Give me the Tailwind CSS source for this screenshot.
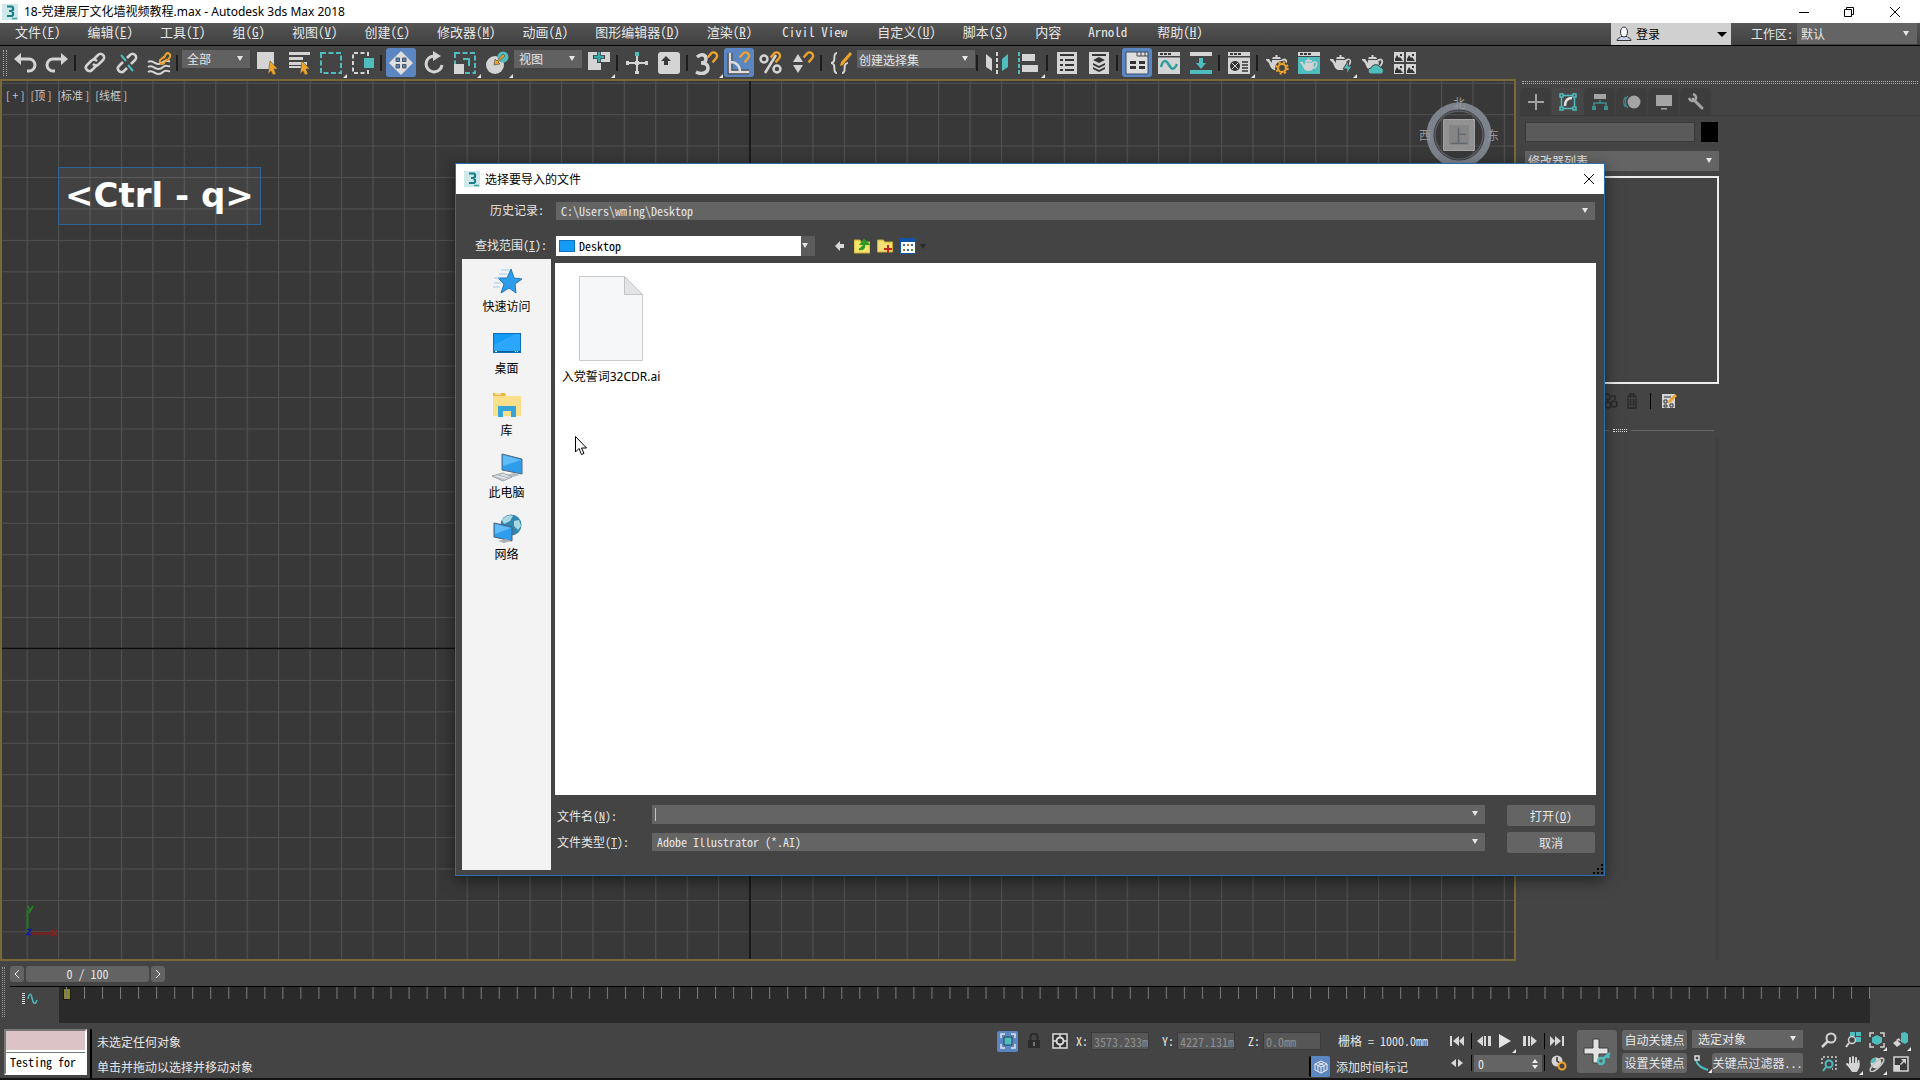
<!DOCTYPE html>
<html lang="zh-CN">
<head>
  <meta charset="UTF-8">
  <meta name="viewport" content="width=device-width, initial-scale=1.0">
  <title>18-党建展厅文化墙视频教程.max - Autodesk 3ds Max 2018</title>
  <script src="https://cdn.jsdelivr.net/npm/@tailwindcss/browser@4"></script>
</head>
<body class="relative h-screen overflow-hidden flex flex-col bg-[#444444] text-[#e6e6e6] text-xs font-['Noto_Sans_CJK_SC',sans-serif] [font-feature-settings:'hwid']">

  <!-- Shared symbols -->
  <svg class="hidden">
    <symbol id="caret" viewBox="0 0 6 5"><path d="M0 0h6L3 5z" fill="currentColor"/></symbol>
    <symbol id="corner" viewBox="0 0 4 4"><path d="M4 0v4H0z" fill="#e8e8e8"/></symbol>
    <symbol id="logo" viewBox="0 0 16 16">
      <rect width="16" height="16" fill="#cfe9ea"/>
      <path d="M5 2.500h5l1 1v2.500L9.500 7 11 8.500V11l-1 1H5" fill="none" stroke="#177f86" stroke-width="2.200"/>
      <path d="M7 7h3" stroke="#177f86" stroke-width="2"/>
      <path d="M10 14.500h5" stroke="#35a3a8" stroke-width="1.500"/>
    </symbol>
    <symbol id="teapot" viewBox="0 0 24 24">
      <path d="M8 6h7l1 2H7z" fill="#d2d2d2"/><path d="M10.500 4h2v2h-2z" fill="#d2d2d2"/>
      <path d="M1 8h3l3 4V9h10c2 4 0 8-3 10H9c-3-1-4-4-5-7L1 9z" fill="#d2d2d2"/>
      <path d="M16 10c4-3 6-1 5 2s-3 4-5 4" fill="none" stroke="#d2d2d2" stroke-width="1.800"/>
    </symbol>
    <symbol id="magnet" viewBox="0 0 12 12">
      <path d="M1.500 6l3-3.500a3 3 0 0 1 5 4L6 10.500" fill="none" stroke="#eda32b" stroke-width="2.200"/>
    </symbol>
    <symbol id="window" viewBox="0 0 24 24">
      <path d="M1 1h22v4H1zM1 6.500h22V23H1z" fill="#d4d4d4"/>
      <path d="M3 2h3v2H3zM7 2h3v2H7zM11 2h3v2h-3z" fill="#3a3a3a"/>
    </symbol>
    <symbol id="picture" viewBox="0 0 10 10">
      <rect width="10" height="10" fill="#d4d4d4"/><path d="M1 9V7l2-4 2 3 1-1 3 4zM6 2h2v2H6z" fill="#333"/>
    </symbol>
  </svg>

  <!-- Title bar -->
  <header class="flex items-center h-[23px] shrink-0 bg-white text-black pl-0.5 pr-0.5">
    <svg class="size-4"><use href="#logo"/></svg>
    <h1 class="ml-1.5 flex-1 font-['Noto_Sans','Noto_Sans_CJK_SC',sans-serif] [font-feature-settings:normal]">18-党建展厅文化墙视频教程.max - Autodesk 3ds Max 2018</h1>
    <div class="flex">
      <button aria-label="最小化" class="w-[45px] grid place-items-center"><svg class="size-3" viewBox="0 0 12 12"><path d="M1 6.500h10" stroke="#000"/></svg></button>
      <button aria-label="还原" class="w-[45px] grid place-items-center"><svg class="size-3" viewBox="0 0 12 12" fill="none" stroke="#000"><path d="M1.500 3.500h7v7h-7zM3.500 3.500v-2h7v7h-2"/></svg></button>
      <button aria-label="关闭" class="w-[47px] grid place-items-center"><svg class="size-3" viewBox="0 0 12 12" stroke="#000"><path d="M1 1l10 10M11 1L1 11"/></svg></button>
    </div>
  </header>

  <!-- Menu bar -->
  <div class="flex h-[23px] shrink-0 bg-linear-to-b from-[#555555] to-[#404040] border-b border-black">
    <nav class="flex flex-1 gap-[27px] pl-[15px] text-[13px] leading-[18px]">
      <a href="#">文件(<u>F</u>)</a>
      <a href="#">编辑(<u>E</u>)</a>
      <a href="#">工具(<u>T</u>)</a>
      <a href="#">组(<u>G</u>)</a>
      <a href="#">视图(<u>V</u>)</a>
      <a href="#">创建(<u>C</u>)</a>
      <a href="#">修改器(<u>M</u>)</a>
      <a href="#">动画(<u>A</u>)</a>
      <a href="#">图形编辑器(<u>D</u>)</a>
      <a href="#">渲染(<u>R</u>)</a>
      <a href="#" class="px-[3px]">Civil View</a>
      <a href="#">自定义(<u>U</u>)</a>
      <a href="#">脚本(<u>S</u>)</a>
      <a href="#">内容</a>
      <a href="#" class="pr-[3px]">Arnold</a>
      <a href="#">帮助(<u>H</u>)</a>
    </nav>
    <button class="flex items-center w-[120px] bg-[#d0d0d0] text-black pl-[5px] pr-1">
      <svg class="size-4" viewBox="0 0 16 16"><path d="M1 14.500c0-3 3-2 4-4h6c1 2 4 1 4 4z" fill="#cdd3ea" stroke="#333"/><ellipse cx="8" cy="6" rx="3.500" ry="5" fill="#f6f8ff" stroke="#333"/></svg>
      <span class="ml-1 flex-1 text-left">登录</span>
      <svg class="w-2.5 h-[5px]" viewBox="0 0 10 5"><path d="M0 0h10L5 5z"/></svg>
    </button>
    <label for="workspace" class="ml-5 mr-1 leading-[22px]">工作区:</label>
    <div class="relative w-[120px] mr-[3px]">
      <select id="workspace" class="appearance-none w-full h-[21px] bg-[#646464] pl-1"><option>默认</option></select>
      <svg class="absolute right-2 top-2 w-1.5 h-[5px] pointer-events-none"><use href="#caret"/></svg>
    </div>
  </div>

  <!-- Main toolbar -->
  <div class="flex items-center h-[33px] shrink-0">
    <div class="w-1 h-[26px] ml-[3px] mr-0.5 border-x border-dotted border-[#a8a8a8]"></div>
    <button aria-label="撤消" class="size-8 grid place-items-center"><svg class="size-6" viewBox="0 0 24 24"><path d="M5 8h11a5 5 0 0 1 0 12h-2" fill="none" stroke="#d4d4d4" stroke-width="3"/><path d="M8 2v12L1 8z" fill="#d4d4d4"/></svg></button>
    <button aria-label="重做" class="size-8 grid place-items-center"><svg class="size-6" viewBox="0 0 24 24"><path d="M19 8H8a5 5 0 0 0 0 12h2" fill="none" stroke="#d4d4d4" stroke-width="3"/><path d="M16 2v12l7-6z" fill="#d4d4d4"/></svg></button>
    <div class="w-1.5 h-4 border-l-2 border-[#1d1d1d] ml-px -mr-px"></div>
    <button aria-label="链接" class="size-8 grid place-items-center"><svg class="size-6" viewBox="0 0 24 24" fill="none" stroke="#d4d4d4" stroke-width="2.500"><path d="M10 9l5-5c2-2 4-1 5 0s2 3 0 5l-4 4c-2 2-4 2-6 0"/><path d="M14 14l-5 5c-2 2-4 1-5 0s-2-3 0-5l4-4c2-2 4-2 6 0"/></svg></button>
    <button aria-label="取消链接" class="size-8 grid place-items-center"><svg class="size-6" viewBox="0 0 24 24" fill="none" stroke="#d4d4d4" stroke-width="2.500"><path d="M12 7l3-3c2-2 4-1 5 0s2 3 0 5l-4 4"/><path d="M12 17l-3 3c-2 2-4 1-5 0s-2-3 0-5l4-4"/><path d="M6 4l5 6M13 14l5 6" stroke="#4fbcbd" stroke-width="2"/></svg></button>
    <button aria-label="绑定到空间扭曲" class="size-8 grid place-items-center"><svg class="size-6" viewBox="0 0 24 24" fill="none" stroke="#d4d4d4" stroke-width="2"><path d="M1 11c3-2 5 0 7 1s5 2 8-1 4 0 7-1M1 16c3-2 5 0 7 1s5 2 8-1 4 0 7-1M1 21c3-2 5 0 7 1s5 2 8-1 4 0 7-1"/><path d="M17 7l2-4c2-2 5 0 4 3l-3 4M18 5l-5 4c-1 3 2 5 4 3l3-4" stroke="#eda32b"/></svg></button>
    <div class="w-1.5 h-4 border-l-2 border-[#1d1d1d] ml-px -mr-px"></div>
    <div class="relative self-start mt-1 mx-px w-[68px]">
      <select aria-label="选择过滤器" class="appearance-none w-full h-[18px] bg-[#616161] pl-[5px] leading-[18px]"><option>全部</option></select>
      <svg class="absolute right-[7px] top-1.5 w-1.5 h-[5px] pointer-events-none"><use href="#caret"/></svg>
    </div>
    <button aria-label="选择对象" class="size-8 grid place-items-center"><svg class="size-6" viewBox="0 0 24 24"><path d="M2 1h17v17H2z" fill="#d4d4d4"/><path d="M15 10l8 8h-4l2 5-3 1-2-4-3 3z" fill="#eda32b" stroke="#444" stroke-width=".5"/></svg></button>
    <button aria-label="按名称选择" class="size-8 grid place-items-center"><svg class="size-6" viewBox="0 0 24 24"><path d="M2 1h21v3H2zM2 6h14v3H2zM2 11h18v3H2zM2 15h12v2H2z" fill="#d4d4d4"/><path d="M15 10l8 8h-4l2 5-3 1-2-4-3 3z" fill="#eda32b" stroke="#444" stroke-width=".5"/></svg></button>
    <button aria-label="矩形选择区域" class="relative size-8 grid place-items-center"><svg class="size-6" viewBox="0 0 24 24"><path d="M2 2h20v20H2z" fill="none" stroke="#4fbcbd" stroke-width="2" stroke-dasharray="5 2.500"/></svg><svg class="absolute right-0 bottom-px size-1"><use href="#corner"/></svg></button>
    <button aria-label="窗口/交叉" class="size-8 grid place-items-center"><svg class="size-6" viewBox="0 0 24 24"><path d="M17 5V2H2v20h15v-4" fill="none" stroke="#d4d4d4" stroke-width="2" stroke-dasharray="4 2.500"/><path d="M13 7h10v10H13z" fill="#4fbcbd"/></svg></button>
    <div class="w-1.5 h-4 border-l-2 border-[#1d1d1d] ml-px -mr-px"></div>
    <button aria-label="移动" class="w-[30px] h-[29px] mx-px rounded-[3px] bg-[#5b86c2] grid place-items-center"><svg class="size-6" viewBox="0 0 24 24"><path d="M12 0l12 12-12 12L0 12z" fill="#dedede"/><path d="M7 7h3.500v3.500H7zM13.500 7H17v3.500h-3.500zM7 13.500h3.500V17H7zM13.500 13.500H17V17h-3.500z" fill="#5b86c2" stroke="#4a5564"/></svg></button>
    <button aria-label="旋转" class="size-8 grid place-items-center"><svg class="size-6" viewBox="0 0 24 24"><path d="M13 5a8 8 0 1 0 8 9" fill="none" stroke="#d4d4d4" stroke-width="3"/><path d="M12 0v10l8-5z" fill="#d4d4d4"/></svg></button>
    <button aria-label="缩放" class="relative size-8 grid place-items-center"><svg class="size-6" viewBox="0 0 24 24"><path d="M2 2h20v20H2z" fill="none" stroke="#4fbcbd" stroke-width="2" stroke-dasharray="5 2.500"/><path d="M1 13h10v10H1z" fill="#d4d4d4"/><path d="M10 8h6v7" fill="none" stroke="#4fbcbd" stroke-width="2"/></svg><svg class="absolute right-0 bottom-px size-1"><use href="#corner"/></svg></button>
    <button aria-label="放置" class="relative size-8 grid place-items-center"><svg class="size-6" viewBox="0 0 24 24"><circle cx="10" cy="14" r="9" fill="#d4d4d4"/><circle cx="18" cy="6" r="5.500" fill="#4fbcbd"/><path d="M20 5l-7 6 2 2-6 1 1-6 2 2 6-7z" fill="#eda32b" stroke="#444" stroke-width=".6"/></svg><svg class="absolute right-0 bottom-px size-1"><use href="#corner"/></svg></button>
    <div class="relative self-start mt-1 mx-px w-[68px]">
      <select aria-label="参考坐标系" class="appearance-none w-full h-[18px] bg-[#616161] pl-[5px] leading-[18px]"><option>视图</option></select>
      <svg class="absolute right-[7px] top-1.5 w-1.5 h-[5px] pointer-events-none"><use href="#caret"/></svg>
    </div>
    <button aria-label="使用轴点中心" class="relative size-8 grid place-items-center"><svg class="size-6" viewBox="0 0 24 24"><path d="M1 1h22v10h-9v8H1z" fill="#d4d4d4"/><path d="M12 0v12M6 6h12" stroke="#444" stroke-width="4"/><path d="M12 1v10M7 6h10" stroke="#38a9aa" stroke-width="2.500"/></svg><svg class="absolute right-0 bottom-px size-1"><use href="#corner"/></svg></button>
    <div class="w-1.5 h-4 border-l-2 border-[#1d1d1d] ml-px -mr-px"></div>
    <button aria-label="选择并操纵" class="size-8 grid place-items-center"><svg class="size-6" viewBox="0 0 24 24"><path d="M12 5v16M2 12h20" stroke="#d4d4d4" stroke-width="2"/><path d="M10 20h4v3h-4zM1 10h3v4H1zM20 10h3v4h-3zM10 10h4v4h-4z" fill="#d4d4d4"/><path d="M10 1h4v4h-4z" fill="#4fbcbd"/></svg></button>
    <button aria-label="键盘快捷键覆盖" class="size-8 grid place-items-center"><svg class="size-6" viewBox="0 0 24 24"><rect x="1" y="1" width="22" height="22" rx="3" fill="#d4d4d4"/><path d="M9 5l5 5h-3v4H7v-4H4z" fill="#3a3a3a"/></svg></button>
    <div class="w-1.5 h-4 border-l-2 border-[#1d1d1d] ml-px -mr-px"></div>
    <button aria-label="捕捉开关" class="relative size-8 grid place-items-center"><svg class="size-6" viewBox="0 0 24 24"><path d="M2 6c5-4 9-2 9 2 0 3-3 4-5 4 3 0 7 1 7 5 0 5-6 7-12 4" fill="none" stroke="#d4d4d4" stroke-width="3.500"/><use href="#magnet" x="11" y="0" width="13" height="13"/></svg><svg class="absolute right-0 bottom-px size-1"><use href="#corner"/></svg></button>
    <button aria-label="角度捕捉" class="w-[30px] h-[29px] mx-px rounded-[3px] bg-[#5b86c2] grid place-items-center"><svg class="size-6" viewBox="0 0 24 24"><path d="M3 2v19h19" fill="none" stroke="#444" stroke-width="5"/><path d="M3 2v19h19M4 11c5 0 9 4 9 9" fill="none" stroke="#dedede" stroke-width="2.500"/><use href="#magnet" x="11" y="0" width="13" height="13"/></svg></button>
    <button aria-label="百分比捕捉" class="size-8 grid place-items-center"><svg class="size-6" viewBox="0 0 24 24"><path d="M17 4L6 22" stroke="#d4d4d4" stroke-width="2.500"/><g fill="none" stroke="#d4d4d4" stroke-width="2.500"><circle cx="5" cy="8" r="3.500"/><circle cx="18" cy="18" r="3.500"/></g><use href="#magnet" x="10" y="0" width="13" height="13"/></svg></button>
    <button aria-label="微调器捕捉" class="size-8 grid place-items-center"><svg class="size-6" viewBox="0 0 24 24"><path d="M2 11l5-8 5 8zM2 14l5 8 5-8z" fill="#d4d4d4"/><use href="#magnet" x="11" y="0" width="13" height="13"/></svg></button>
    <div class="w-1.5 h-4 border-l-2 border-[#1d1d1d] ml-px -mr-px"></div>
    <button aria-label="编辑命名选择集" class="size-8 grid place-items-center"><svg class="size-6" viewBox="0 0 24 24"><path d="M8 2C4 2 6 8 5 10s-2 2-3 2c1 0 2 0 3 2s-1 8 3 8M13 22c4 0 2-6 3-8s2-2 3-2" fill="none" stroke="#d4d4d4" stroke-width="2"/><path d="M21 1l2 2-9 11-3 1 1-4z" fill="#eda32b"/></svg></button>
    <div class="relative self-start mt-1 w-[118px]">
      <select aria-label="命名选择集" class="appearance-none w-full h-[18px] bg-[#616161] pl-0.5 leading-[17px]"><option>创建选择集</option></select>
      <svg class="absolute right-[7px] top-1.5 w-1.5 h-[5px] pointer-events-none"><use href="#caret"/></svg>
    </div>
    <div class="w-1.5 h-4 border-l-2 border-[#1d1d1d] ml-px -mr-px"></div>
    <button aria-label="镜像" class="size-8 grid place-items-center"><svg class="size-6" viewBox="0 0 24 24"><path d="M1 3l6 5v12l-6-4z" fill="#d4d4d4"/><path d="M23 3l-6 5v12l6-4z" fill="#4fbcbd"/><path d="M12 1v22" stroke="#d4d4d4" stroke-width="2" stroke-dasharray="4 2"/></svg></button>
    <button aria-label="对齐" class="relative size-8 grid place-items-center"><svg class="size-6" viewBox="0 0 24 24"><path d="M2 1v22" stroke="#4fbcbd" stroke-width="2" stroke-dasharray="4 2"/><path d="M5 3h13v7H5zM5 14h16v7H5z" fill="#d4d4d4"/></svg><svg class="absolute right-0 bottom-px size-1"><use href="#corner"/></svg></button>
    <div class="w-1.5 h-4 border-l-2 border-[#1d1d1d] ml-px -mr-px"></div>
    <button aria-label="场景资源管理器" class="size-8 grid place-items-center"><svg class="size-6" viewBox="0 0 24 24"><path d="M2 1h20v22H2z" fill="#d4d4d4"/><path d="M5 4h14M5 9h3M10 9h9M5 14h3M10 14h9M5 19h3M10 19h9" stroke="#333" stroke-width="2"/></svg></button>
    <button aria-label="层资源管理器" class="size-8 grid place-items-center"><svg class="size-6" viewBox="0 0 24 24"><path d="M2 1h20v22H2z" fill="#d4d4d4"/><path d="M5 3h14v2H5zM12 6l6 3-6 3-6-3zM6 12l6 3 6-3v2l-6 3-6-3zM6 16l6 3 6-3v2l-6 3-6-3z" fill="#333"/></svg></button>
    <div class="w-1.5 h-4 border-l-2 border-[#1d1d1d] ml-px -mr-px"></div>
    <button aria-label="功能区" class="w-[30px] h-[29px] mx-px rounded-[3px] bg-[#5b86c2] grid place-items-center"><svg class="size-6" viewBox="0 0 24 24"><path d="M1 1h22v22H1z" fill="#dedede" stroke="#3a4a66"/><path d="M12 1v4h11M16 1v4M20 1v4" fill="none" stroke="#444"/><path d="M5 10h6v3H5zM14 10h6v3h-6zM5 15h6v3H5zM14 15h6v3h-6z" fill="#333"/></svg></button>
    <button aria-label="曲线编辑器" class="size-8 grid place-items-center"><svg class="size-6" viewBox="0 0 24 24"><use href="#window"/><path d="M4 16c2-8 5-7 8-2s5 5 8-1" fill="none" stroke="#2f9c9d" stroke-width="2.500"/></svg></button>
    <button aria-label="图解视图" class="size-8 grid place-items-center"><svg class="size-6" viewBox="0 0 24 24"><path d="M1 1h22v4H1z" fill="#d4d4d4"/><path d="M1 19h22v4H1zM10 7h4v5h3l-5 6-5-6h3z" fill="#4fbcbd"/></svg></button>
    <div class="w-1.5 h-4 border-l-2 border-[#1d1d1d] ml-px -mr-px"></div>
    <button aria-label="材质编辑器" class="relative size-8 grid place-items-center"><svg class="size-6" viewBox="0 0 24 24"><use href="#window"/><circle cx="8" cy="15" r="5" fill="#333"/><path d="M5 12l6 6M11 12l-6 6" stroke="#d4d4d4"/><path d="M15 11h6M15 14h6M15 17h6M15 20h6" stroke="#333" stroke-width="1.500"/></svg><svg class="absolute right-0 bottom-px size-1"><use href="#corner"/></svg></button>
    <div class="w-1.5 h-4 border-l-2 border-[#1d1d1d] ml-px -mr-px"></div>
    <button aria-label="渲染设置" class="size-8 grid place-items-center"><svg class="size-6" viewBox="0 0 24 24"><use href="#teapot"/><circle cx="17" cy="17" r="7" fill="#444"/><circle cx="17" cy="17" r="4" fill="none" stroke="#eda32b" stroke-width="2.200"/><circle cx="17" cy="17" r="5.700" fill="none" stroke="#eda32b" stroke-width="2" stroke-dasharray="2.200 2.300"/></svg></button>
    <button aria-label="渲染帧窗口" class="size-8 grid place-items-center"><svg class="size-6" viewBox="0 0 24 24"><use href="#window"/><path d="M1 6h22v17H1z" fill="#4fbcbd"/><use href="#teapot" x="2" y="4" width="20" height="20"/></svg></button>
    <button aria-label="渲染产品" class="relative size-8 grid place-items-center"><svg class="size-6" viewBox="0 0 24 24"><use href="#teapot"/><path d="M20 9l-6 9h4l-1 6 6-9h-4z" fill="#4fbcbd" stroke="#444"/></svg><svg class="absolute right-0 bottom-px size-1"><use href="#corner"/></svg></button>
    <button aria-label="云渲染" class="size-8 grid place-items-center"><svg class="size-6" viewBox="0 0 24 24"><use href="#teapot"/><path d="M10 23a3 3 0 0 1 0-6 5 5 0 0 1 9-1 4 4 0 0 1 2 7z" fill="#4fbcbd" stroke="#444"/></svg></button>
    <button aria-label="渲染库" class="size-8 grid place-items-center"><svg class="size-6" viewBox="0 0 24 24"><use href="#picture" x="1" y="1" width="10" height="10"/><use href="#picture" x="13" y="1" width="10" height="10"/><use href="#picture" x="1" y="13" width="10" height="10"/><use href="#picture" x="13" y="13" width="10" height="10"/></svg></button>
  </div>

  <!-- Viewport and command panel -->
  <main class="flex flex-1 min-h-0">
    <section class="relative flex-1 bg-[#383838] border-2 border-[#786a38] overflow-hidden">
      <svg class="absolute inset-0 size-full">
        <defs>
          <pattern id="grid" x="747.500" y="567.500" width="31.430" height="31.430" patternUnits="userSpaceOnUse">
            <path d="M0 .5h32M.5 0v32" stroke="#525252" stroke-width="1.200"/>
          </pattern>
        </defs>
        <rect width="100%" height="100%" fill="url(#grid)"/>
        <path d="M748 0v900M0 567.500h1600" stroke="#0c0c0c" stroke-width="1.500"/>
        <!-- Axis tripod -->
        <path d="M25.500 829v22" stroke="#1f7a1f" stroke-width="2"/>
        <path d="M29 852.500h22" stroke="#6f2424" stroke-width="3"/>
        <path d="M26 825l2 4M31 825l-4 7" stroke="#1f8f1f" stroke-width="1.500"/>
        <path d="M50 849l5 6M55 849l-5 6" stroke="#8f2020" stroke-width="1.500"/>
        <path d="M25 848.500h4l-4 5h4" fill="none" stroke="#1414a8" stroke-width="1.500"/>
      </svg>
      <p class="relative flex gap-1.5 pl-1 pt-[5px] text-[11px] leading-[18px] text-[#c8c8c8] [font-feature-settings:normal]"><span>[ + ]</span><span>[顶 ]</span><span>[标准 ]</span><span>[线框 ]</span></p>
      <div class="absolute left-14 top-[86px] h-[58px] px-[6px] flex items-center border border-[#2f639c] bg-white/5 text-white text-[34px] font-black font-['DejaVu_Sans',sans-serif] [font-feature-settings:normal] whitespace-pre">&lt;Ctrl - q&gt;</div>
      <!-- View cube -->
      <div class="absolute right-[15px] top-[13px] w-20 text-[#96989c]">
        <svg class="size-20" viewBox="0 0 80 80">
          <circle cx="40" cy="41" r="29" fill="none" stroke="#7d838c" stroke-width="7"/>
          <circle cx="40" cy="41" r="24" fill="none" stroke="#5a5d62" stroke-width="1.500"/>
          <path d="M24.500 25.500h31v31h-31z" fill="#929292" stroke="#a4a4a4"/>
          <path d="M30 31h20v20H30z" fill="#858585"/>
        </svg>
        <span class="absolute left-[34px] top-0 leading-[18px]">北</span>
        <span class="absolute left-0 top-8 leading-[18px]">西</span>
        <span class="absolute right-0 top-8 leading-[18px]">东</span>
        <span class="absolute left-[31px] top-8 text-lg leading-[18px] text-[#60666e]">上</span>
      </div>
    </section>

    <aside class="w-[404px] pl-1 pt-0.5">
      <div class="h-[3px] mx-0.5 border-y border-dotted border-[#a8a8a8]"></div>
      <div class="flex mt-1 border-b border-[#393939]">
        <button aria-label="创建" class="w-[31px] h-[27px] mr-px rounded-t bg-[#3d3d3d] grid place-items-center"><svg class="size-[18px]" viewBox="0 0 18 18"><path d="M9 1v16M1 9h16" stroke="#a4a4a4" stroke-width="2"/></svg></button>
        <button aria-label="修改" class="w-[31px] h-[27px] mr-px rounded-t bg-[#474747] grid place-items-center"><svg class="size-[18px]" viewBox="0 0 18 18" fill="none" stroke="#4fbcbd" stroke-width="1.500"><path d="M4 2.500h10M4 15.500h10M2.500 4v10M15.500 4v10"/><path d="M1 1h3v3H1zM14 1h3v3h-3zM1 14h3v3H1zM14 14h3v3h-3z"/><path d="M6 13c0-5 2-8 7-8" stroke="#e0e0e0" stroke-width="2.500"/></svg></button>
        <button aria-label="层次" class="w-[31px] h-[27px] mr-px rounded-t bg-[#3d3d3d] grid place-items-center"><svg class="size-[18px]" viewBox="0 0 18 18"><path d="M3 1h12v5H3z" fill="#a4a4a4"/><path d="M9 7v3M3 14v-4h12v4" fill="none" stroke="#3f8d8e" stroke-width="1.500"/><path d="M1 13h4v4H1zM13 13h4v4h-4z" fill="#3f8d8e"/></svg></button>
        <button aria-label="运动" class="w-[31px] h-[27px] mr-px rounded-t bg-[#3d3d3d] grid place-items-center"><svg class="size-[18px]" viewBox="0 0 18 18"><circle cx="11" cy="9" r="6.500" fill="#a4a4a4"/><path d="M5 3a8 8 0 0 0 0 12M2.500 4a8 8 0 0 0 0 10" fill="none" stroke="#3f8d8e" stroke-width="1.300"/></svg></button>
        <button aria-label="显示" class="w-[31px] h-[27px] mr-px rounded-t bg-[#3d3d3d] grid place-items-center"><svg class="size-[18px]" viewBox="0 0 18 18"><path d="M1 2h16v11H1zM6 15h6v1.500H6z" fill="#a4a4a4"/></svg></button>
        <button aria-label="实用程序" class="w-[31px] h-[27px] mr-px rounded-t bg-[#3d3d3d] grid place-items-center"><svg class="size-[18px]" viewBox="0 0 18 18"><path d="M6 6l9 9" stroke="#a4a4a4" stroke-width="3" stroke-linecap="round"/><path d="M2 5c1 3 4 4 6 2s1-5-2-6" fill="none" stroke="#a4a4a4" stroke-width="2.500"/></svg></button>
      </div>
      <div class="w-[194px] ml-[5px] mt-1.5">
        <div class="flex items-center">
          <input type="text" aria-label="对象名称" class="w-[170px] h-5 bg-[#5a5a5a] border border-[#3a3a3a]">
          <button aria-label="对象颜色" class="ml-1.5 w-[17px] h-5 bg-black"></button>
        </div>
        <div class="relative mt-[9px]">
          <select aria-label="修改器列表" class="appearance-none block w-full h-5 bg-[#646464] pl-[3px] leading-[18px]"><option>修改器列表</option></select>
          <svg class="absolute right-[7px] top-[7px] w-1.5 h-[5px] pointer-events-none"><use href="#caret"/></svg>
        </div>
        <div class="mt-[5px] h-[208px] border-2 border-[#ececec]"></div>
        <div class="mt-[9px] flex justify-end items-center pr-[42px]">
          <svg class="size-4" viewBox="0 0 16 16" fill="none" stroke="#2a2a2a" stroke-width="1.500"><circle cx="5" cy="4" r="3"/><circle cx="6" cy="12" r="3"/><circle cx="12" cy="11" r="3"/><path d="M9 3h4v4"/></svg>
          <svg class="ml-1.5 size-4" viewBox="0 0 16 16" fill="none" stroke="#272727" stroke-width="1.300"><path d="M4 5v10h8V5M3 3.500h10M6 3V1h4v2M6.500 6v7M9.500 6v7"/></svg>
          <div class="ml-2.5 h-4 border-l border-black"></div>
          <svg class="ml-2.5 size-4" viewBox="0 0 16 16"><path d="M1 1h13v14H1z" fill="#d4d4d4"/><path d="M3 4h7M3 7h3v3H3zM3 12h3v2H3zM9 11h3v3H9z" fill="none" stroke="#333"/><path d="M14 1l2 2-7 7-2 0 1-3z" fill="#eda32b"/></svg>
        </div>
        <div class="mt-5 flex items-center gap-1 pr-[5px]">
          <div class="w-[84px] border-t border-[#666]"></div>
          <div class="w-3.5 h-[3px] border-y border-dotted border-[#ddd]"></div>
          <div class="flex-1 border-t border-[#666]"></div>
        </div>
        <div class="mt-1.5 h-[522px] border-r-4 border-[#3f3f3f]"></div>
      </div>
    </aside>
  </main>

  <!-- Time slider -->
  <div class="flex h-[62px] shrink-0 pl-0.5">
    <div class="w-[3px] my-[6px] border-x border-dotted border-[#9a9a9a]"></div>
    <div class="flex-1 ml-[5px]">
      <div class="flex items-end gap-0.5 h-[26px] pb-1 border-b border-black">
        <button aria-label="上一帧" class="w-3.5 h-4 rounded-[3px] bg-[#636363] grid place-items-center"><svg class="w-1.5 h-2.5" viewBox="0 0 6 10"><path d="M5 1L1 5l4 4" fill="none" stroke="#eee"/></svg></button>
        <button class="w-[123px] h-4 rounded-[3px] bg-[#636363] leading-4">0 / 100</button>
        <button aria-label="下一帧" class="w-3.5 h-4 rounded-[3px] bg-[#636363] grid place-items-center"><svg class="w-1.5 h-2.5" viewBox="0 0 6 10"><path d="M1 1l4 4-4 4" fill="none" stroke="#eee"/></svg></button>
      </div>
      <div class="flex h-9 pr-[50px]">
        <button aria-label="迷你曲线编辑器" class="w-[49px] grid justify-start items-center pl-3 pb-3"><svg class="w-4 h-3" viewBox="0 0 16 12" fill="none"><path d="M1.500 0v12" stroke="#ddd" stroke-width="3" stroke-dasharray="1 1"/><path d="M6 6c1-6 3-6 4-1s3 8 5 2" stroke="#4fbcbd" stroke-width="1.500"/></svg></button>
        <div class="flex-1 bg-[#2a2a2a]">
          <svg class="w-full h-9">
            <defs>
              <pattern id="frames" x="7" y="0" width="18.030" height="36" patternUnits="userSpaceOnUse"><path d="M.5 0v12" stroke="#7c7c7c"/></pattern>
            </defs>
            <rect x="4.500" y="1.500" width="7" height="11" fill="#8b8626" stroke="#1c1c10"/>
            <rect width="100%" height="36" fill="url(#frames)"/>
          </svg>
        </div>
      </div>
    </div>
  </div>

  <!-- Status bar -->
  <footer class="flex h-[57px] shrink-0 pl-1 pt-[6px] border-b-2 border-[#141414]">
    <div class="w-[83px] h-[46px] flex flex-col border-2 border-t-[#777] border-l-[#777] border-white text-black">
      <div class="flex-1 bg-[#dcc3c6] border-b-2 border-white"></div>
      <input type="text" aria-label="脚本侦听器" value="Testing for" class="h-[21px] w-full bg-white border-t border-[#777] pl-1 pb-[3px]">
    </div>
    <div class="ml-[3px] h-[49px] border-l-2 border-black"></div>
    <div class="flex-1 pl-[5px] leading-[25px]">
      <p>未选定任何对象</p>
      <p>单击并拖动以选择并移动对象</p>
    </div>

    <!-- Coordinates -->
    <div class="w-[448px] pt-0.5">
      <div class="flex items-center h-5">
        <button aria-label="孤立当前选择" class="size-[21px] rounded-[2px] bg-[#5b86c2] grid place-items-center"><svg class="size-4" viewBox="0 0 16 16"><path d="M1 5V1h4M11 1h4v4M15 11v4h-4M5 15H1v-4" fill="none" stroke="#e4e4e4" stroke-width="1.500"/><path d="M4 4h8v8H4z" fill="#4fbcbd" stroke="#2b3c55"/></svg></button>
        <button aria-label="选择锁定切换" class="ml-1.5 size-5 grid place-items-center"><svg class="size-4" viewBox="0 0 16 16"><path d="M2 7h12v8H2z" fill="#2b2b2b"/><path d="M4.500 7V4a3.500 3.500 0 0 1 7 0v3" fill="none" stroke="#2b2b2b" stroke-width="2"/><path d="M7 9h2v4H7z" fill="#777"/></svg></button>
        <button aria-label="绝对模式变换输入" class="mx-1.5 size-5 grid place-items-center"><svg class="size-4" viewBox="0 0 16 16"><path d="M1 1h14v14H1z" fill="#333" stroke="#ddd" stroke-width="1.500"/><circle cx="8" cy="8" r="3.500" fill="none" stroke="#ddd" stroke-width="2"/><path d="M8 1v4M8 11v4M1 8h4M11 8h4" stroke="#ddd" stroke-width="1.500"/></svg></button>
        <label for="cx" class="w-[15px]">X:</label>
        <input id="cx" type="text" value="3573.233m" class="w-[58px] h-[18px] bg-[#565656] border border-[#3b3b3b] pl-0.5 text-[#8f8f8f] mr-[13px]">
        <label for="cy" class="w-[15px]">Y:</label>
        <input id="cy" type="text" value="4227.131m" class="w-[58px] h-[18px] bg-[#565656] border border-[#3b3b3b] pl-0.5 text-[#8f8f8f] mr-[13px]">
        <label for="cz" class="w-[15px]">Z:</label>
        <input id="cz" type="text" value="0.0mm" class="w-[58px] h-[18px] bg-[#565656] border border-[#3b3b3b] pl-0.5 text-[#8f8f8f] mr-[17px]">
        <span class="whitespace-nowrap">栅格 = 1000.0mm</span>
      </div>
      <div class="flex items-center mt-[5px] ml-[312px]">
        <button aria-label="自适应降级" class="size-[21px] border-l-2 border-black rounded-[2px] bg-[#5b86c2] grid place-items-center"><svg class="size-3.5" viewBox="0 0 14 14" fill="none" stroke="#eee"><path d="M7 1l6 3v6l-6 3-6-3V4zM1 4l6 3 6-3M7 7v6M4 2.500l6 3v6M10 2.500l-6 3v6"/></svg></button>
        <span class="ml-1.5">添加时间标记</span>
      </div>
    </div>

    <!-- Playback -->
    <div class="w-[132px] pt-1">
      <div class="flex items-center h-4">
        <button aria-label="转至开头" class="w-6 pl-1"><svg class="w-4 h-3" viewBox="0 0 16 12" fill="#d8d8d8"><path d="M1 1h2v10H1zM10 1v10L4 6zM15 1v10l-5-5z"/></svg></button>
        <div class="h-4 border-l border-black mx-0.5"></div>
        <button aria-label="上一帧" class="w-5 pl-0.5"><svg class="w-4 h-3" viewBox="0 0 16 12" fill="#d8d8d8"><path d="M7 1v10L1 6zM8 1h2v10H8zM12 1h3v10h-3z"/></svg></button>
        <button aria-label="播放动画" class="relative w-6 h-4 pl-1"><svg class="w-3.5 h-3.5" viewBox="0 0 14 14" fill="#e4e4e4"><path d="M1 0l12 7-12 7z"/></svg><svg class="absolute right-0.5 -bottom-1 size-1"><use href="#corner"/></svg></button>
        <button aria-label="下一帧" class="w-6 pl-1"><svg class="w-4 h-3" viewBox="0 0 16 12" fill="#d8d8d8"><path d="M9 1v10l6-5zM1 1h3v10H1zM6 1h2v10H6z"/></svg></button>
        <div class="h-4 border-l border-black mx-0.5"></div>
        <button aria-label="转至结尾" class="w-5 pl-0.5"><svg class="w-4 h-3" viewBox="0 0 16 12" fill="#d8d8d8"><path d="M13 1h2v10h-2zM1 1v10l5-5zM6 1v10l6-5z"/></svg></button>
      </div>
      <div class="flex items-center h-5 mt-1">
        <button aria-label="关键点模式切换" class="w-6 pl-1.5"><svg class="w-3 h-2" viewBox="0 0 12 8" fill="#d8d8d8"><path d="M5 0v8L0 4zM7 0v8l5-4z"/></svg></button>
        <div class="h-4 border-l border-black mx-0.5"></div>
        <div class="relative w-[68px]">
          <input type="text" aria-label="当前帧" value="0" class="w-full h-[17px] bg-[#646464] pl-1">
          <svg class="absolute right-1 top-1 w-1.5 h-2.5 pointer-events-none" viewBox="0 0 6 10" fill="#eee"><path d="M0 4h6L3 0zM0 6h6l-3 4z"/></svg>
        </div>
        <div class="h-4 border-l border-black mx-0.5"></div>
        <button aria-label="时间配置" class="w-5 pl-1"><svg class="size-4" viewBox="0 0 16 16"><circle cx="6" cy="6" r="5.500" fill="#d4d4d4"/><path d="M6 2v4l3 2" fill="none" stroke="#333" stroke-width="1.500"/><circle cx="11" cy="11" r="3.500" fill="#444" stroke="#eda32b" stroke-width="2" /></svg></button>
      </div>
    </div>

    <!-- Keying -->
    <div class="flex gap-[5px] pt-px">
      <button aria-label="设置关键点" class="w-10 h-[43px] rounded-[3px] bg-[#646464] grid place-items-center"><svg class="size-8" viewBox="0 0 32 32"><path d="M12 3h6v9h9v6h-9v9h-6v-9H3v-6h9z" fill="#e2e2e2" stroke="#3c3c3c"/><circle cx="20" cy="25" r="3" fill="none" stroke="#4fbcbd" stroke-width="2.500"/><path d="M22 23l7-6M26 19l2 3" stroke="#4fbcbd" stroke-width="2.500"/></svg></button>
      <div class="flex flex-col gap-[3px] w-[65px]">
        <button class="h-5 rounded-[3px] bg-[#646464] leading-5">自动关键点</button>
        <button class="h-5 rounded-[3px] bg-[#646464] leading-5">设置关键点</button>
      </div>
      <div class="w-[111px]">
        <div class="relative">
          <select aria-label="关键点选择集" class="appearance-none block w-full h-[18px] bg-[#646464] pl-1.5 leading-[18px]"><option>选定对象</option></select>
          <svg class="absolute right-[7px] top-1.5 w-1.5 h-[5px] pointer-events-none"><use href="#caret"/></svg>
        </div>
        <div class="flex mt-[5px]">
          <button aria-label="默认切线" class="relative w-5 h-5"><svg class="size-5" viewBox="0 0 20 20" fill="none"><path d="M4 7c1 5 5 8 12 10" stroke="#4fbcbd" stroke-width="2"/><path d="M3 3h4v4H3z" stroke="#ddd" stroke-width="1.500"/></svg><svg class="absolute right-0 bottom-0 size-1"><use href="#corner"/></svg></button>
          <button class="w-[91px] h-5 rounded-[3px] bg-[#646464] leading-5 whitespace-nowrap">关键点过滤器...</button>
        </div>
      </div>
    </div>

    <!-- Viewport navigation -->
    <div class="grid grid-cols-4 content-start gap-y-0.5 w-24 ml-3.5 mr-[7px]">
      <button aria-label="缩放" class="h-[22px] grid place-items-center"><svg class="size-4" viewBox="0 0 16 16" fill="none" stroke="#d4d4d4"><circle cx="10" cy="6" r="4.500" stroke-width="2"/><path d="M6.500 9.500L1 15" stroke-width="2.500"/></svg></button>
      <button aria-label="缩放所有视图" class="h-[22px] grid place-items-center"><svg class="size-4" viewBox="0 0 16 16" fill="none"><path d="M5 0h5v4H5zM11 0h5v4h-5zM11 5h5v5h-5z" fill="#4fbcbd"/><circle cx="7" cy="8" r="3.500" stroke="#d4d4d4" stroke-width="1.500"/><path d="M4 11l-3 4" stroke="#d4d4d4" stroke-width="2"/></svg></button>
      <button aria-label="最大化显示选定对象" class="relative h-[22px] grid place-items-center"><svg class="size-4" viewBox="0 0 16 16" fill="none"><path d="M1 5V1h4M11 1h4v4M15 11v4h-4M5 15H1v-4" stroke="#d4d4d4" stroke-width="1.500"/><path d="M8 3l5 2.500v5L8 13l-5-2.500v-5z" fill="#4fbcbd"/></svg><svg class="absolute right-0.5 bottom-0 size-1"><use href="#corner"/></svg></button>
      <button aria-label="所有视图最大化显示" class="relative h-[22px] grid place-items-center"><svg class="size-4" viewBox="0 0 16 16"><path d="M8 1l4-1 3 2v8l-3 2-4-2z" fill="#4fbcbd"/><path d="M0 11l4-3 4 4-4 3zM3 8l3-2 2 3z" fill="#d4d4d4"/></svg><svg class="absolute right-0.5 bottom-0 size-1"><use href="#corner"/></svg></button>
      <button aria-label="缩放区域" class="h-[22px] grid place-items-center"><svg class="size-4" viewBox="0 0 16 16" fill="none"><path d="M1 8V1h14v12h-4" stroke="#d4d4d4" stroke-width="1.500" stroke-dasharray="2 2"/><circle cx="8" cy="8" r="3.500" stroke="#4fbcbd" stroke-width="2"/><path d="M5 11l-3 4" stroke="#4fbcbd" stroke-width="2"/></svg></button>
      <button aria-label="平移视图" class="relative h-[22px] grid place-items-center"><svg class="size-4" viewBox="0 0 16 16"><path d="M5 8V2M8 7V1M11 8V2M13.500 9V5M5 11L2 8" stroke="#d4d4d4" stroke-width="2" stroke-linecap="round"/><path d="M4 7h10.500v4L12 16H7l-4-6z" fill="#d4d4d4"/></svg><svg class="absolute right-0.5 bottom-0 size-1"><use href="#corner"/></svg></button>
      <button aria-label="环绕" class="relative h-[22px] grid place-items-center"><svg class="size-4" viewBox="0 0 16 16" fill="none"><circle cx="7" cy="7" r="5.500" fill="#d4d4d4"/><path d="M7 1.500A5.500 5.500 0 0 0 1.500 7H7z" fill="#4fbcbd"/><ellipse cx="8" cy="9" rx="9" ry="3" transform="rotate(-45 8 9)" stroke="#c4c4c4" stroke-width="1.500"/></svg><svg class="absolute right-0.5 bottom-0 size-1"><use href="#corner"/></svg></button>
      <button aria-label="最大化视口切换" class="h-[22px] grid place-items-center"><svg class="size-4" viewBox="0 0 16 16"><path d="M1 1h14v14H1z" fill="#3a3a3a" stroke="#d4d4d4" stroke-width="1.500"/><path d="M1 9h6v6H1zM8 3h5v5l-2-2-3 3-1-1 3-3z" fill="#d4d4d4"/></svg></button>
    </div>
  </footer>

  <!-- Import file dialog -->
  <div role="dialog" aria-labelledby="dlgTitle" class="absolute left-[455px] top-[163px] w-[1150px] h-[713px] flex flex-col border border-[#2a6eb0] bg-[#444444] shadow-[0_4px_14px_rgba(0,0,0,0.5)]">
    <div class="flex items-center h-[30px] shrink-0 bg-white text-black pl-2">
      <svg class="size-4"><use href="#logo"/></svg>
      <h2 id="dlgTitle" class="ml-[5px] pb-px flex-1">选择要导入的文件</h2>
      <button aria-label="关闭" class="w-[30px] h-full grid place-items-center"><svg class="size-3" viewBox="0 0 12 12" stroke="#000"><path d="M1 1l10 10M11 1L1 11"/></svg></button>
    </div>

    <div class="flex items-center mt-2 pr-[9px]">
      <label for="history" class="w-[100px] pr-3 pb-0.5 text-right leading-4">历史记录:</label>
      <div class="relative flex-1">
        <select id="history" class="appearance-none block w-full h-[18px] bg-[#646464] pl-[5px] leading-[18px]"><option>C:\Users\wming\Desktop</option></select>
        <svg class="absolute right-[7px] top-1.5 w-1.5 h-[5px] pointer-events-none"><use href="#caret"/></svg>
      </div>
    </div>

    <div class="flex items-center mt-4">
      <label for="lookin" class="w-[100px] pr-[9px] pb-0.5 text-right leading-4">查找范围(<u>I</u>):</label>
      <div class="relative w-[259px] bg-[#5c5c5c]">
        <select id="lookin" class="appearance-none block w-[245px] h-5 bg-white text-black pl-[23px] leading-5"><option>Desktop</option></select>
        <svg class="absolute left-[3px] top-1 w-4 h-3 pointer-events-none" viewBox="0 0 16 12"><rect x=".5" y=".5" width="15" height="11" fill="#149bf5" stroke="#0d72be"/></svg>
        <svg class="absolute right-[7px] top-[7px] w-1.5 h-[5px] pointer-events-none"><use href="#caret"/></svg>
      </div>
      <div class="flex items-center gap-[7px] ml-4">
        <button aria-label="后退"><svg class="size-4" viewBox="0 0 16 16"><path d="M4 8l5-5v3h4v4H9v3z" fill="#d8d8d8"/></svg></button>
        <button aria-label="向上一级"><svg class="size-4" viewBox="0 0 16 16"><path d="M0 2h6l1 2h9v11H0z" fill="#f5e36c" stroke="#c9ae2e"/><path d="M5 11c4 1 6-1 5-5M7 6l3-4 4 4z" fill="#2d9a28" stroke="#2d9a28" stroke-width="2"/></svg></button>
        <button aria-label="新建文件夹"><svg class="size-4" viewBox="0 0 16 16"><path d="M.5 2h6l1 2h8v10H.5z" fill="#f5df75" stroke="#c9ae2e"/><path d="M11 7v8M7 11h8" stroke="#c0281c" stroke-width="2"/></svg></button>
        <button aria-label="查看菜单" class="flex items-center gap-1"><svg class="size-4" viewBox="0 0 16 16"><path d="M.5.5h15v15H.5z" fill="#fff" stroke="#0d56a8"/><path d="M0 0h16v4H0z" fill="#0d56a8"/><path d="M3 6h2v2H3zM11 6h2v2h-2zM7 11h2v2H7z" fill="#3b62a8"/><path d="M7 6h2v2H7zM3 11h2v2H3z" fill="#c0702c"/><path d="M11 11h2v2h-2z" fill="#3a8a4a"/></svg><svg class="w-1.5 h-[5px] text-[#2a2a2a]"><use href="#caret"/></svg></button>
      </div>
    </div>

    <div class="flex flex-1 min-h-0 mt-[3px] pl-1.5 pb-[5px]">
      <nav class="w-[89px] pt-1.5 bg-[#f3f3f3] text-black">
        <a href="#" class="flex flex-col items-center h-[62px]">
          <svg class="size-8" viewBox="0 0 32 32"><path d="M20 4l3 9 8 1-7 5 1 9-7-5-8 5 3-9-6-6h9z" fill="#2f9cec" stroke="#1f78c0"/><path d="M10 5h8M8 9h8M3 13h6M3 18h7M2 22h7" stroke="#9ccbee"/></svg>
          <span class="leading-[18px]">快速访问</span>
        </a>
        <a href="#" class="flex flex-col items-center h-[62px]">
          <svg class="size-8" viewBox="0 0 32 32"><rect x="2.500" y="6.500" width="27" height="19" fill="#149bf5" stroke="#0d6fb8"/><path d="M3 18L24 7h5v17H3z" fill="#2aa7fb"/><path d="M3 24.500h26" stroke="#0b5d9c"/><path d="M4 24.500h2M24 24.500h1M26 24.500h1" stroke="#fff"/></svg>
          <span class="leading-[18px]">桌面</span>
        </a>
        <a href="#" class="flex flex-col items-center h-[62px]">
          <svg class="size-8" viewBox="0 0 32 32"><path d="M2 4h12l1 3h15v20H2z" fill="#fbe08c"/><path d="M2 4h12l1 3H2z" fill="#e8b93c"/><path d="M4 5h6" stroke="#fff"/><path d="M7 28V17h18v11h-5v-6h-8v6z" fill="#35a5da"/></svg>
          <span class="leading-[18px]">库</span>
        </a>
        <a href="#" class="flex flex-col items-center h-[62px]">
          <svg class="size-8" viewBox="0 0 32 32"><path d="M11 3l20 5v15l-20-4z" fill="#2f9cec" stroke="#56687a"/><path d="M12 4l18 5-18 6z" fill="#5fbcf7"/><path d="M15 24l8-2 6 2-7 2z" fill="#b4bcc3"/><path d="M1 25l11-3 9 4-9 4z" fill="#dfe3e6" stroke="#98a1a8"/><path d="M4 26l10 3M7 24l11 3" stroke="#a9b1b8"/></svg>
          <span class="leading-[18px]">此电脑</span>
        </a>
        <a href="#" class="flex flex-col items-center h-[62px]">
          <svg class="size-8" viewBox="0 0 32 32"><circle cx="20" cy="12" r="10.500" fill="#3287ae"/><path d="M11 7c3-4 8-6 11-4l-3 5-6 3zM23 8l5-1 2 6-3 4-4-4z" fill="#a9d8e2"/><path d="M3 10l18 4v14L3 24z" fill="#2f9cec" stroke="#4a5e72"/><path d="M4 11l16 4-16 6z" fill="#5fbcf7"/><path d="M7 28l8-2 5 2-7 2z" fill="#a9b2b8"/></svg>
          <span class="leading-[18px]">网络</span>
        </a>
      </nav>

      <div class="flex flex-col flex-1 pt-1 pl-1">
        <div class="flex-1 mr-2 bg-white text-black">
          <a href="#" class="flex flex-col items-center w-[112px] pt-[13px]">
            <svg class="w-16 h-[86px]" viewBox="0 0 64 86"><path d="M.5.500h45l18 18v66H.5z" fill="#f6f7f9" stroke="#c9cacc"/><path d="M45.500.500v18h18z" fill="#e3e4e6" stroke="#c2c3c5"/></svg>
            <span class="mt-[5px] leading-5 font-['Noto_Sans','Noto_Sans_CJK_SC',sans-serif] [font-feature-settings:normal] whitespace-nowrap">入党誓词32CDR.ai</span>
          </a>
        </div>

        <div class="grid grid-cols-[97px_1fr_88px] items-center gap-y-1.5 mt-2.5 mb-[17px] mr-[9px]">
          <label for="filename" class="pl-0.5">文件名(<u>N</u>):</label>
          <div class="relative mr-[22px] pb-0.5">
            <input id="filename" type="text" class="block w-full h-[19px] bg-[#646464] pl-1">
            <span class="absolute left-[3px] top-[3px] h-[13px] border-l border-[#c4c4c4]"></span>
            <svg class="absolute right-[7px] top-1.5 w-1.5 h-[5px] pointer-events-none"><use href="#caret"/></svg>
          </div>
          <button class="h-[21px] rounded-[2px] bg-[#646464] leading-[21px]">打开(<u>O</u>)</button>
          <label for="filetype" class="pl-0.5 pb-0.5">文件类型(<u>T</u>):</label>
          <div class="relative mr-[22px] pb-0.5">
            <select id="filetype" class="appearance-none block w-full h-[18px] bg-[#646464] pl-[5px] leading-[18px]"><option>Adobe Illustrator (*.AI)</option></select>
            <svg class="absolute right-[7px] top-1.5 w-1.5 h-[5px] pointer-events-none"><use href="#caret"/></svg>
          </div>
          <button class="h-[21px] rounded-[2px] bg-[#646464] leading-[21px]">取消</button>
        </div>
      </div>
    </div>
    <svg class="absolute right-px bottom-px size-2.5" viewBox="0 0 10 10"><path d="M8 0h2v2H8zM8 4h2v2H8zM4 4h2v2H4zM8 8h2v2H8zM4 8h2v2H4zM0 8h2v2H0z"/></svg>
  </div>

  <!-- Pointer -->
  <svg class="absolute left-[575px] top-[436px] w-3 h-[19px] pointer-events-none" viewBox="0 0 12 19"><path d="M.5.500v15.500l3.500-3.500 2.500 6 2.500-1-2.500-5.500h5z" fill="#fff" stroke="#000"/></svg>

</body>
</html>
